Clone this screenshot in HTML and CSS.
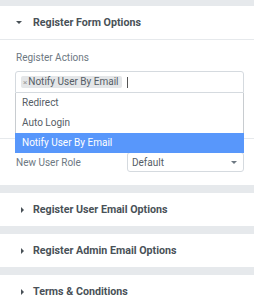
FILE: index.html
```html
<!DOCTYPE html>
<html>
<head>
<meta charset="utf-8">
<link rel="stylesheet" href="styles.css">
</head>
<body>
<div class="panel">
  <div class="section">
    <div class="head"><span class="caret-down"></span><span class="title">Register Form Options</span></div>
    <div class="control c-actions">
      <div class="label">Register Actions</div>
      <div class="multi">
        <span class="tag"><span class="x">×</span>Notify User By Email</span>
        <span class="cursor"></span>
        <ul class="dropdown">
          <li>Redirect</li>
          <li>Auto Login</li>
          <li class="hl">Notify User By Email</li>
        </ul>
      </div>
    </div>
    <div class="control c-role">
      <div class="label">New User Role</div>
      <div class="select"><span>Default</span><span class="caret-sel"></span></div>
    </div>
  </div>
  <div class="section">
    <div class="head"><span class="caret-right"></span><span class="title">Register User Email Options</span></div>
  </div>
  <div class="section">
    <div class="head"><span class="caret-right"></span><span class="title">Register Admin Email Options</span></div>
  </div>
  <div class="section">
    <div class="head"><span class="caret-right"></span><span class="title">Terms &amp; Conditions</span></div>
  </div>
</div>
</body>
</html>
```
FILE: styles.css
```css
html, body { margin: 0; padding: 0; }
body {
  background: #e6e9ec;
  font-family: Roboto, "Liberation Sans", sans-serif;
  width: 254px;
  height: 300px;
  overflow: hidden;
}
.panel {
  padding-top: 6px;
  display: flex;
  flex-direction: column;
  gap: 8px;
}
.section { background: #fff; }
.head {
  height: 33px;
  display: flex;
  align-items: center;
  border-bottom: 1px solid #e6e9ec;
}
.section:not(:first-child) .head { border-bottom: 0; height: 33px; }
.title {
  font-size: 10.7px;
  font-weight: 700;
  color: #495157;
  margin-left: 33px;
}
.caret-down {
  width: 0; height: 0;
  margin-left: 16px;
  margin-right: -22px;
  border-left: 3px solid transparent;
  border-right: 3px solid transparent;
  border-top: 3px solid #495157;
}
.caret-right {
  width: 0; height: 0;
  margin-left: 21px;
  margin-right: -24px;
  border-top: 3px solid transparent;
  border-bottom: 3px solid transparent;
  border-left: 3px solid #495157;
}
.control { padding: 0 10px 0 16px; }
.c-actions {
  padding-top: 10px;
  padding-bottom: 45px;
  border-bottom: 1px solid #e6e9ec;
}
.label {
  font-size: 10px;
  line-height: 15px;
  color: #6d7882;
}
.multi {
  position: relative;
  margin-top: 6px;
  margin-left: -1px;
  height: 20px;
  border: 1px solid #d5dadf;
  border-radius: 3px 3px 0 0;
  display: flex;
  align-items: center;
  padding-left: 5px;
}
.tag {
  background: #e4e6e8;
  color: #555d66;
  font-size: 10px;
  line-height: 12px;
  height: 12px;
  padding: 0 3px 0 2px;
  border-radius: 2px;
}
.x { font-size: 8px; color: #999; margin-right: 1px; }
.cursor {
  width: 1px; height: 11px;
  background: #555;
  margin-left: 5px;
}
.dropdown {
  position: absolute;
  left: -1px; right: -1px;
  top: 21px;
  margin: 0; padding: 0;
  list-style: none;
  background: #fff;
  border: 1px solid #c8ccd0;
  border-top: 0;
  z-index: 5;
}
.dropdown li {
  height: 20px;
  line-height: 20px;
  padding-left: 6px;
  font-size: 10px;
  color: #555d66;
}
.dropdown li.hl {
  background: #5897fb;
  color: #fff;
  margin: 0 -1px -1px -1px;
  padding-left: 7px;
}
.c-role {
  padding-top: 13px;
  padding-bottom: 13px;
  display: flex;
  align-items: center;
  justify-content: space-between;
}
.select {
  width: 105px;
  height: 18px;
  border: 1px solid #d5dadf;
  border-radius: 3px;
  display: flex;
  align-items: center;
  justify-content: space-between;
  padding-left: 4px;
  padding-right: 6px;
  font-size: 10px;
  color: #555d66;
}
.caret-sel {
  width: 0; height: 0;
  border-left: 3px solid transparent;
  border-right: 3px solid transparent;
  border-top: 3px solid #6d7882;
}
```
